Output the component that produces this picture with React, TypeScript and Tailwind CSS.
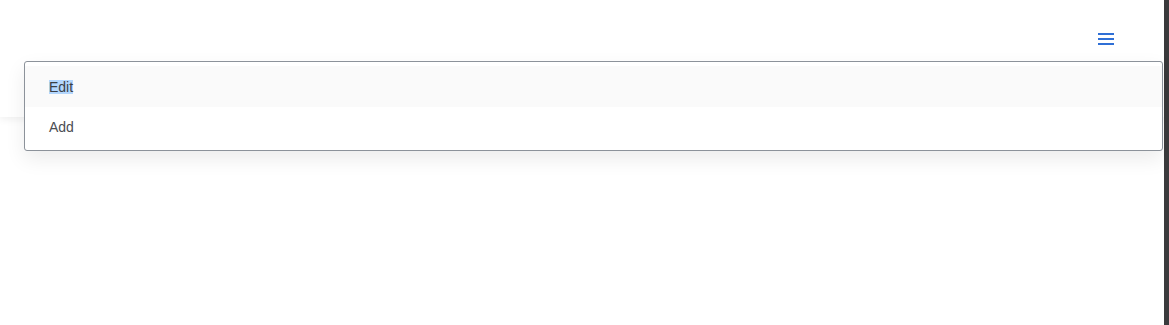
import React from 'react';

const MenuIcon: React.FC = () => (
  <svg width="16" height="12" viewBox="0 0 16 12" className="block">
    <rect x="0" y="0" width="16" height="2" fill="#2f6fd6" />
    <rect x="0" y="5" width="16" height="2" fill="#2f6fd6" />
    <rect x="0" y="10" width="16" height="2" fill="#2f6fd6" />
  </svg>
);

const App: React.FC = () => {
  return (
    <div className="flex h-[325px] w-full bg-white font-['Liberation_Sans',Arial,sans-serif]">
      <div className="relative flex-1">
        <header className="flex h-[117px] items-start justify-end bg-white pr-[50px] pt-[33px] shadow-[0_2px_8px_rgba(0,0,0,0.07)]">
          <button className="p-0" aria-label="Open menu">
            <MenuIcon />
          </button>
        </header>

        <div className="absolute left-[24px] right-[1px] top-[61px] overflow-hidden rounded-[3px] border border-[#8c929a] bg-white pb-[2px] pt-[4px] shadow-[0_8px_20px_rgba(0,0,0,0.08)]">
          <div className="flex h-[41px] items-center bg-[#fafafa] pl-[24px] text-[14px] text-[#3a3f45]">
            <span className="inline-block h-[14px] bg-[#b3d6fd] leading-[14px]">Edit</span>
          </div>
          <div className="flex h-[41px] items-center bg-white pl-[24px] text-[14px] text-[#4a4d52]">
            Add
          </div>
        </div>
      </div>
      <div className="w-[5px] bg-[#3b3b3d]" />
    </div>
  );
};

export default App;
